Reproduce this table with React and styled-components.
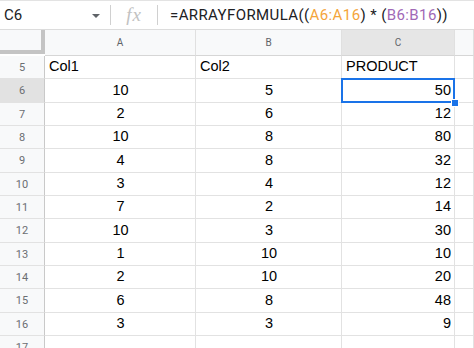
import React from "react";
import styled, { createGlobalStyle } from "styled-components";

const Global = createGlobalStyle`
  html, body { margin: 0; padding: 0; background: #fff; }
  body { width: 474px; height: 348px; overflow: hidden; font-family: "Liberation Sans", Arial, sans-serif; }
`;

const Page = styled.div`
  width: 474px;
  height: 348px;
  overflow: hidden;
  display: flex;
  flex-direction: column;
`;

const FormulaBar = styled.div`
  height: 28px;
  border-top: 1px solid #e3e3e3;
  border-bottom: 1px solid #dcdcdc;
  display: flex;
  align-items: center;
  flex-shrink: 0;
`;

const NameBox = styled.div`
  width: 110px;
  display: flex;
  align-items: center;
  justify-content: space-between;
  padding: 0 10px 0 4px;
  box-sizing: border-box;
  font-family: Roboto, "Liberation Sans", sans-serif;
  font-size: 15px;
  color: #202124;
`;

const Caret = styled.span`
  width: 0;
  height: 0;
  border-left: 4px solid transparent;
  border-right: 4px solid transparent;
  border-top: 4px solid #5f6368;
  margin-top: 2px;
`;

const Sep = styled.div`
  width: 1px;
  height: 20px;
  background: #d0d0d0;
`;

const Fx = styled.div`
  width: 46px;
  text-align: center;
  font-family: "Liberation Serif", "Times New Roman", serif;
  font-style: italic;
  font-size: 19px;
  color: #c2c2c2;
  letter-spacing: 1px;
`;

const Formula = styled.div`
  padding-left: 12px;
  font-family: Roboto, "Liberation Sans", sans-serif;
  font-size: 15px;
  letter-spacing: 0.4px;
  color: #202124;
  white-space: pre;
`;

const Ref = styled.span`
  color: ${(p) => p.$c};
`;

const Row = styled.div`
  display: grid;
  grid-template-columns: 45px 151px 146px 113px 1fr;
  height: ${(p) => p.$h}px;
  flex-shrink: 0;
`;

const Corner = styled.div`
  background: #f8f9fa;
  border-right: 4px solid #c4c4c4;
  border-bottom: 4px solid #c4c4c4;
  margin-bottom: 2px;
  box-sizing: border-box;
`;

const ColHead = styled.div`
  background: ${(p) => (p.$sel ? "#e6e6e6" : "#f8f9fa")};
  border-right: 1px solid #e0e0e0;
  border-bottom: 1px solid #d6d6d6;
  display: flex;
  align-items: center;
  justify-content: center;
  font-family: Roboto, "Liberation Sans", sans-serif;
  font-size: 10px;
  color: #5f6368;
  box-sizing: border-box;
`;

const RowHead = styled.div`
  background: ${(p) => (p.$sel ? "#e2e2e2" : "#f8f9fa")};
  border-right: 1px solid #c9c9c9;
  border-bottom: 1px solid #e2e2e2;
  display: flex;
  align-items: center;
  justify-content: center;
  font-family: Roboto, "Liberation Sans", sans-serif;
  font-size: 11px;
  color: #6b6e72;
  box-sizing: border-box;
`;

const Cell = styled.div`
  position: relative;
  z-index: ${(p) => (p.$active ? 2 : "auto")};
  border-right: 1px solid #e2e2e2;
  border-bottom: 1px solid #e2e2e2;
  display: flex;
  align-items: flex-end;
  justify-content: ${(p) => p.$align};
  padding: 0 3px 3px 4px;
  box-sizing: border-box;
  font-size: 14.5px;
  color: #000;
  line-height: 17px;
`;

const Selection = styled.span`
  position: absolute;
  left: -1px;
  top: -1px;
  right: -1px;
  bottom: -1px;
  border: 2px solid #1a73e8;
  pointer-events: none;
`;

const Handle = styled.span`
  position: absolute;
  right: -5px;
  bottom: -5px;
  width: 6px;
  height: 6px;
  background: #1a73e8;
  border: 1px solid #fff;
`;

const data = [
  [10, 5, 50],
  [2, 6, 12],
  [10, 8, 80],
  [4, 8, 32],
  [3, 4, 12],
  [7, 2, 14],
  [10, 3, 30],
  [1, 10, 10],
  [2, 10, 20],
  [6, 8, 48],
  [3, 3, 9],
];

const rowH = (i) => Math.round(56 + (i + 1) * (70 / 3)) - Math.round(56 + i * (70 / 3));

export default function App() {
  return (
    <Page>
      <Global />
      <FormulaBar>
        <NameBox>
          C6
          <Caret />
        </NameBox>
        <Sep />
        <Fx>fx</Fx>
        <Sep />
        <Formula>
          =ARRAYFORMULA((<Ref $c="#f4a43a">A6:A16</Ref>) * (<Ref $c="#a068b6">B6:B16</Ref>))
        </Formula>
      </FormulaBar>
      <Row $h={26}>
        <Corner />
        <ColHead>A</ColHead>
        <ColHead>B</ColHead>
        <ColHead $sel>C</ColHead>
        <ColHead />
      </Row>
      <Row $h={rowH(0)}>
        <RowHead>5</RowHead>
        <Cell $align="flex-start">Col1</Cell>
        <Cell $align="flex-start">Col2</Cell>
        <Cell $align="flex-start">PRODUCT</Cell>
        <Cell />
      </Row>
      {data.map((r, i) => (
        <Row key={i} $h={rowH(i + 1)}>
          <RowHead $sel={i === 0}>{i + 6}</RowHead>
          <Cell $align="center">{r[0]}</Cell>
          <Cell $align="center">{r[1]}</Cell>
          <Cell $align="flex-end" $active={i === 0}>
            {r[2]}
            {i === 0 && (
              <>
                <Selection />
                <Handle />
              </>
            )}
          </Cell>
          <Cell />
        </Row>
      ))}
      <Row $h={24}>
        <RowHead>17</RowHead>
        <Cell />
        <Cell />
        <Cell />
        <Cell />
      </Row>
    </Page>
  );
}
